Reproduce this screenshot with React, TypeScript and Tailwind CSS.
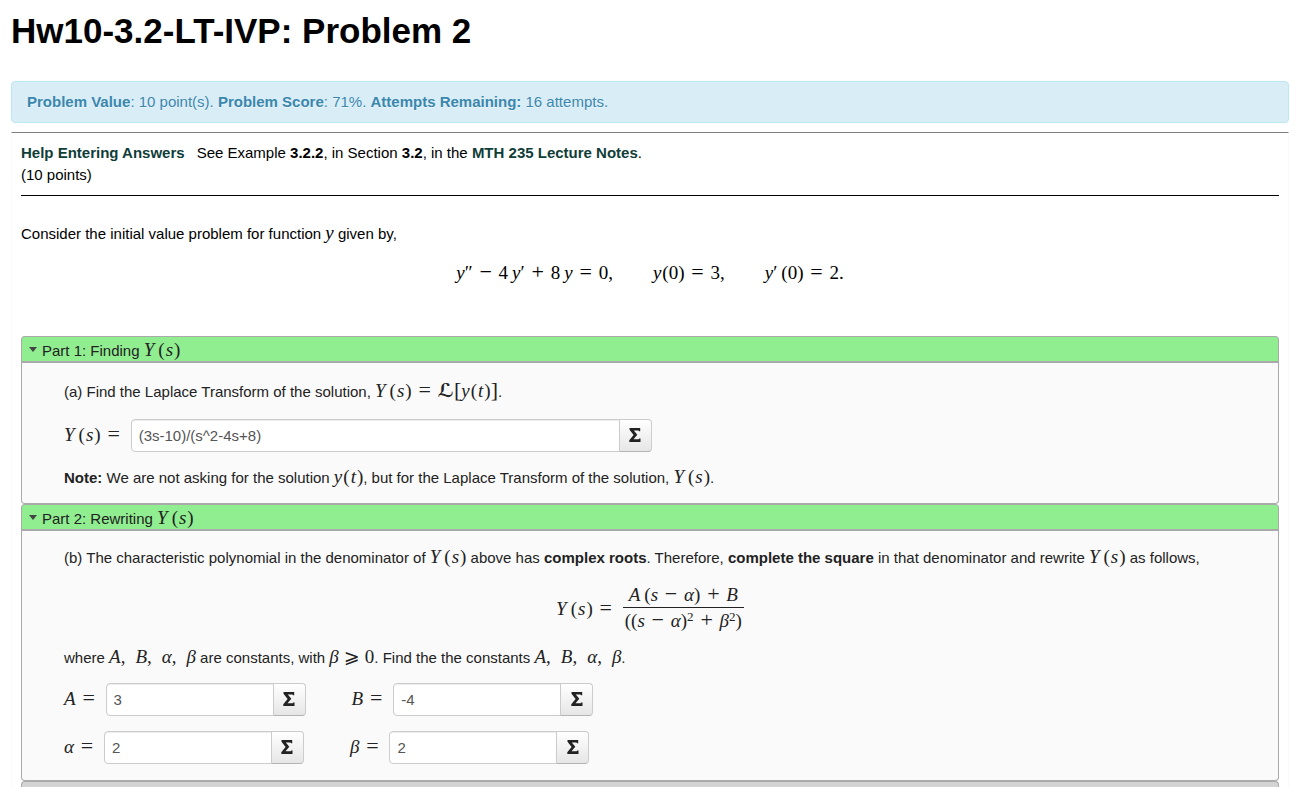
import type { ReactNode } from 'react'

type Children = { children: ReactNode }

// Inline math: upright serif, with variables in <i>
function M({ children }: Children) {
    return <span className="font-['Liberation_Serif',serif] text-[19px] leading-none whitespace-nowrap">{children}</span>
}

// Relation or binary operator with its surrounding space
function Op({ children }: Children) {
    return <span className="inline-block w-[26px] text-center text-[22px] leading-none">{children}</span>
}

function Ys() {
    return (
        <M>
            <i className="mr-1">Y</i>(<i className="mx-px">s</i>)
        </M>
    )
}

function Yt() {
    return (
        <M>
            <i className="mr-px">y</i>(<i className="mx-px">t</i>)
        </M>
    )
}

function Constants() {
    return (
        <M>
            <i>A</i>,<i className="ml-[10px]">B</i>,<i className="ml-[10px]">α</i>,<i className="ml-[10px]">β</i>
        </M>
    )
}

function Part({ title, children }: { title: string; children: ReactNode }) {
    return (
        <details open>
            <summary className="flex h-[27px] cursor-pointer list-none items-center rounded-t border border-b-2 border-[#aaa] bg-[#90ee90] pt-1 pl-[7px] leading-[22px]">
                <svg viewBox="0 0 8 5" className="mr-[5px] mb-1 h-[5px] w-2 fill-[#444]" aria-hidden="true">
                    <path d="M0 0h8L4 5z" />
                </svg>
                <span>
                    {title} <Ys />
                </span>
            </summary>
            <div className="rounded-b border border-t-0 border-[#aaa] bg-[#fafafa] px-[42px]">{children}</div>
        </details>
    )
}

function Answer({ id, label, value, wide }: { id: string; label: ReactNode; value: string; wide?: boolean }) {
    return (
        <div className="flex items-center">
            <label htmlFor={id} className="mr-1 pb-[3px] leading-none">
                {label}
            </label>
            <input
                id={id}
                type="text"
                defaultValue={value}
                className={
                    (wide ? 'w-[489px]' : 'w-[168px]') +
                    ' h-[33px] rounded-l border border-[#ccc] bg-white px-[7px] text-[15px] text-[#555] shadow-[inset_0_1px_1px_rgba(0,0,0,0.075)] outline-none'
                }
            />
            <button
                type="button"
                aria-label="Equation editor"
                className="-ml-px flex h-[33px] w-[33px] items-center justify-center rounded-r border border-[#ccc] border-b-[#b3b3b3] bg-linear-to-b from-white to-[#e6e6e6]"
            >
                <svg viewBox="0 0 12 14" className="mb-[2px] h-[14px] w-3 fill-[#222]" aria-hidden="true">
                    <path d="M.5 0h10.700v3.200H10L9.500 2.500H4.800L8.300 6.700 4.500 11.300H9.700L10.300 10.500h1.200V14H.3v-1.800l4.300-5.300L.5 1.800z" />
                </svg>
            </button>
        </div>
    )
}

export default function App() {
    return (
        <main className="bg-white px-[11px] pt-[11px] font-['Liberation_Sans',Arial,sans-serif] text-[15px] leading-[22px] text-[#222]">
            <h1 className="text-[35px] leading-[40px] font-bold text-black">Hw10-3.2-LT-IVP: Problem 2</h1>

            <div className="mt-[30px] mr-px rounded border border-[#bce8f1] bg-[#d9edf7] px-[15px] py-[9px] text-[#3a87ad] [text-shadow:0_1px_0_rgba(255,255,255,0.5)]">
                <b>Problem Value</b>: 10 point(s). <b>Problem Score</b>: 71%. <b>Attempts Remaining:</b> 16 attempts.
            </div>

            <div className="mt-[9px] mr-px border border-b-0 border-[#fafafa] border-t-[#808080] px-[9px] pt-[9px]">
                <div className="text-black">
                    <a href="#help" className="mr-3 font-bold text-[#0f3d38]">Help Entering Answers</a>
                    See Example <b>3.2.2</b>, in Section <b>3.2</b>, in the{' '}
                    <a href="#notes" className="font-bold text-[#0f3d38]">MTH 235 Lecture Notes</a>.
                    <br />
                    (10 points)
                </div>
                <hr className="mt-[9px] border-black" />

                <p className="mt-[27px] text-black">
                    Consider the initial value problem for function <M><i>y</i></M> given by,
                </p>
                <div className="mt-4 flex justify-center gap-10 text-black">
                    <M>
                        <i>y</i>″<Op>−</Op>4<i className="ml-1">y</i>′<Op>+</Op>8<i className="ml-1">y</i><Op>=</Op>0,
                    </M>
                    <M>
                        <i className="mr-px">y</i>(0)<Op>=</Op>3,
                    </M>
                    <M>
                        <i>y</i>′<span className="ml-1">(0)</span><Op>=</Op>2.
                    </M>
                </div>

                <div className="mt-[53px]">
                    <Part title="Part 1: Finding">
                        <div className="pt-4 pb-[14px]">
                            <p>
                                (a) Find the Laplace Transform of the solution, <Ys />
                                <M>
                                    <Op>=</Op>
                                    <b className="font-['DejaVu_Sans'] italic">ℒ</b>
                                    <span className="text-[22px]">[</span>
                                </M>
                                <Yt />
                                <M><span className="text-[22px]">]</span></M>.
                            </p>
                            <div className="mt-4">
                                <Answer id="ans1" label={<><Ys /><M><Op>=</Op></M></>} value="(3s-10)/(s^2-4s+8)" wide />
                            </div>
                            <p className="mt-[15px]">
                                <b>Note:</b> We are not asking for the solution <Yt />, but for the Laplace Transform of the solution, <Ys />.
                            </p>
                        </div>
                    </Part>

                    <Part title="Part 2: Rewriting">
                        <div className="pt-4 pb-4">
                            <p>
                                (b) The characteristic polynomial in the denominator of <Ys /> above has <b>complex roots</b>. Therefore,{' '}
                                <b>complete the square</b> in that denominator and rewrite <Ys /> as follows,
                            </p>
                            <div className="mt-[14px] flex items-center justify-center">
                                <Ys />
                                <M><Op>=</Op></M>
                                <div className="ml-1 text-center">
                                    <div className="border-b border-[#222] px-[2px]">
                                        <M>
                                            <i className="mr-1">A</i>(<i>s</i><Op>−</Op><i>α</i>)<Op>+</Op><i>B</i>
                                        </M>
                                    </div>
                                    <div className="px-[2px] pt-px">
                                        <M>
                                            ((<i>s</i><Op>−</Op><i>α</i>)<sup className="text-[13px]">2</sup><Op>+</Op><i>β</i><sup className="text-[13px]">2</sup>)
                                        </M>
                                    </div>
                                </div>
                            </div>
                            <p className="mt-3">
                                where <Constants /> are constants, with <M><i>β</i><Op><span className="font-['DejaVu_Sans'] text-[19px]">⩾</span></Op>0</M>. Find the the constants <Constants />.
                            </p>
                            <div className="mt-[14px] flex gap-[46px]">
                                <Answer id="ansA" label={<M><i>A</i><Op>=</Op></M>} value="3" />
                                <Answer id="ansB" label={<M><i>B</i><Op>=</Op></M>} value="-4" />
                            </div>
                            <div className="mt-[15px] flex gap-[46px]">
                                <Answer id="ansAlpha" label={<M><i>α</i><Op>=</Op></M>} value="2" />
                                <Answer id="ansBeta" label={<M><i>β</i><Op>=</Op></M>} value="2" />
                            </div>
                        </div>
                    </Part>

                    {/* Part 3, still locked */}
                    <div className="h-[6px] rounded-t border border-b-0 border-[#aaa] bg-[#d3d3d3]" />
                </div>
            </div>
        </main>
    )
}
